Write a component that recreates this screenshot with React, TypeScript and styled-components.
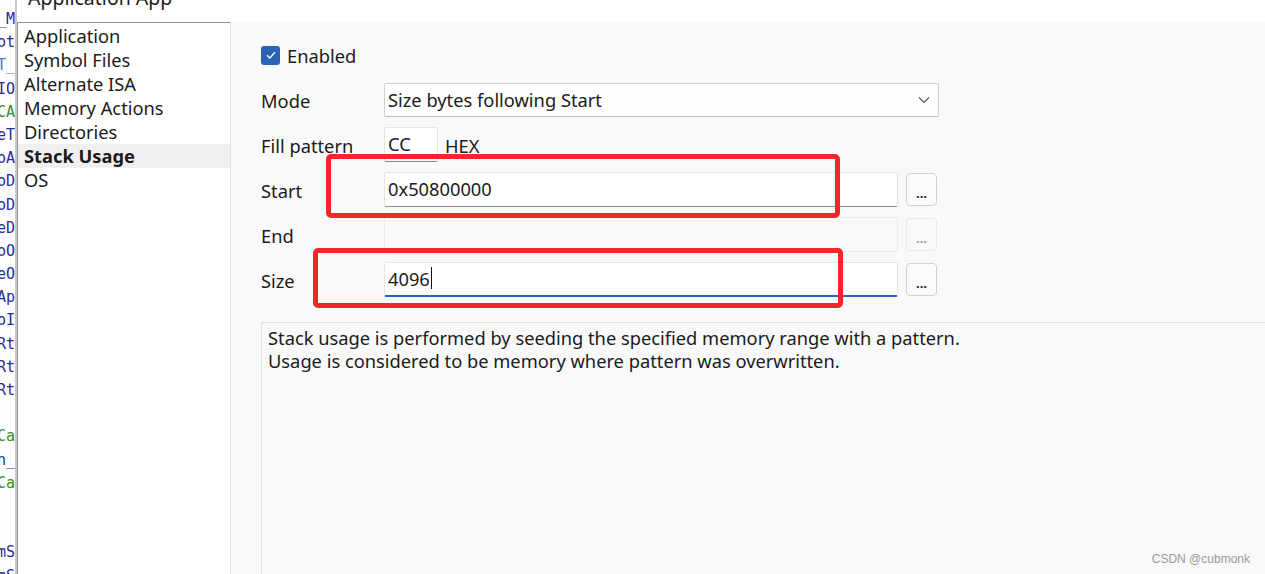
import React from "react";
import styled, { createGlobalStyle } from "styled-components";

const Global = createGlobalStyle`
  html, body { margin: 0; padding: 0; background: #ffffff; }
  body { font-family: "Noto Sans", "Liberation Sans", sans-serif; color: #1b1b1b; }
  #root { height: 574px; }
`;

const Page = styled.div`
  position: relative;
  display: flex;
  width: 1265px;
  height: 574px;
  overflow: hidden;
  background: #ffffff;
`;

const CodeStrip = styled.div`
  width: 15px;
  flex: none;
  display: flex;
  flex-direction: column;
  padding-top: 8px;
  background: #fdfdfd;
  border-right: 2px solid #c9c9c9;
  box-shadow: 1px 0 2px rgba(0, 0, 0, 0.12);
  overflow: hidden;
`;

const CodeLine = styled.div<{ $c: string }>`
  height: 23.2px;
  flex: none;
  display: flex;
  justify-content: flex-end;
  white-space: nowrap;
  font-family: "DejaVu Sans Mono", "Liberation Mono", monospace;
  font-size: 15px;
  line-height: 23.2px;
  color: ${(p) => p.$c};
  overflow: hidden;
`;

const Window = styled.div`
  flex: 1;
  display: flex;
  flex-direction: column;
  min-width: 0;
`;

const TitleBar = styled.div`
  height: 22px;
  flex: none;
  background: #ffffff;
  overflow: hidden;
  padding-left: 11px;
`;

const TitleText = styled.div`
  font-size: 19.5px;
  line-height: 22px;
  margin-top: -13px;
  color: #1b1b1b;
`;

const Body = styled.div`
  flex: 1;
  display: flex;
  min-height: 0;
`;

const Nav = styled.div`
  width: 212px;
  flex: none;
  background: #ffffff;
  border-top: 1px solid #8f8f8f;
  border-left: 1px solid #8f8f8f;
  border-right: 1px solid #e3e3e3;
  padding-top: 1px;
`;

const NavItem = styled.div<{ $active?: boolean }>`
  height: 24px;
  line-height: 24px;
  padding-left: 6px;
  font-size: 18.3px;
  font-weight: ${(p) => (p.$active ? 700 : 400)};
  background: ${(p) => (p.$active ? "#f0f0f0" : "transparent")};
  color: #1b1b1b;
`;

const Content = styled.div`
  flex: 1;
  background: #f9f9f9;
  padding: 23px 0 0 30px;
  display: flex;
  flex-direction: column;
  min-width: 0;
`;

const CheckRow = styled.label`
  display: flex;
  align-items: center;
  height: 20px;
  gap: 7px;
  font-size: 18.3px;
  margin-bottom: 17px;
`;

const CheckBox = styled.span`
  width: 19px;
  height: 19px;
  border-radius: 3px;
  background: #2b62b6;
  display: flex;
  align-items: center;
  justify-content: center;
`;

const Form = styled.div`
  display: flex;
  flex-direction: column;
  gap: 10px;
`;

const Row = styled.div`
  display: flex;
  align-items: center;
  height: 35px;
`;

const Label = styled.div`
  width: 123px;
  flex: none;
  font-size: 18.3px;
  padding-top: 1px;
`;

const SelectBox = styled.div`
  width: 555px;
  height: 34px;
  box-sizing: border-box;
  border: 1px solid #cfcfcf;
  border-bottom-color: #bdbdbd;
  border-radius: 2px;
  background: #fefefe;
  display: flex;
  align-items: center;
  justify-content: space-between;
  padding: 0 8px 0 3px;
  font-size: 18.3px;
`;

const Field = styled.div<{ $w: number; $disabled?: boolean; $focus?: boolean }>`
  width: ${(p) => p.$w}px;
  height: 35px;
  box-sizing: border-box;
  border: 1px solid ${(p) => (p.$disabled ? "#ebebeb" : "#e6e6e6")};
  border-bottom: ${(p) =>
    p.$focus ? "2px solid #2a63bd" : p.$disabled ? "1px solid #ebebeb" : "1px solid #8a8a8a"};
  border-radius: 2px;
  background: ${(p) => (p.$disabled ? "#f9f9f9" : "#ffffff")};
  display: flex;
  align-items: center;
  padding: 0 3px 2px;
  font-size: 18.3px;
`;

const Caret = styled.span`
  display: inline-block;
  width: 1px;
  height: 22px;
  background: #111;
  margin-left: 1px;
`;

const Suffix = styled.div`
  font-size: 18.3px;
  margin-left: 7px;
  padding-top: 2px;
`;

const DotButton = styled.button<{ $disabled?: boolean }>`
  width: 31px;
  height: 33px;
  margin-left: 8px;
  box-sizing: border-box;
  border: 1px solid ${(p) => (p.$disabled ? "#e8e8e8" : "#d2d2d2")};
  border-radius: 4px;
  background: ${(p) => (p.$disabled ? "#f9f9f9" : "#fbfbfb")};
  color: ${(p) => (p.$disabled ? "#a0a0a0" : "#1b1b1b")};
  font-family: "Noto Sans", sans-serif;
  font-size: 13px;
  font-weight: 700;
  padding: 6px 0 0;
  line-height: 20px;
`;

const Description = styled.div`
  margin-top: 25px;
  margin-right: -4px;
  flex: 1;
  border: 1px solid #e3e3e3;
  border-bottom: none;
  border-right: none;
  background: #f9f9f9;
  padding: 3px 6px;
  font-size: 18.3px;
  line-height: 23px;
`;

const Annotation = styled.div<{ $x: number; $y: number; $w: number; $h: number }>`
  position: absolute;
  left: ${(p) => p.$x}px;
  top: ${(p) => p.$y}px;
  width: ${(p) => p.$w}px;
  height: ${(p) => p.$h}px;
  box-sizing: border-box;
  border: 5px solid #f1282a;
  border-radius: 5px;
  pointer-events: none;
`;

const Watermark = styled.div`
  position: absolute;
  right: 15px;
  bottom: 8px;
  font-family: "Liberation Sans", Arial, sans-serif;
  font-size: 12px;
  color: #9a9a9a;
`;

const codeLines: [string, string][] = [
  ["__M", "#2d2a9c"],
  ["pot", "#2d2a9c"],
  ["_T_", "#3f7fd6"],
  ["_IO", "#2d2a9c"],
  ["_CA", "#3a8a2e"],
  ["eeT", "#2d2a9c"],
  ["boA", "#2d2a9c"],
  ["boD", "#2d2a9c"],
  ["boD", "#2d2a9c"],
  ["eeD", "#2d2a9c"],
  ["boO", "#2d2a9c"],
  ["eeO", "#2d2a9c"],
  ["pAp", "#2d2a9c"],
  ["boI", "#2d2a9c"],
  ["_Rt", "#2d2a9c"],
  ["_Rt", "#2d2a9c"],
  ["_Rt", "#2d2a9c"],
  ["", "#2d2a9c"],
  ["_Ca", "#3a8a2e"],
  ["in_", "#2d2a9c"],
  ["_Ca", "#3a8a2e"],
  ["", "#2d2a9c"],
  ["", "#2d2a9c"],
  ["umS", "#2d2a9c"],
  ["umS", "#2d2a9c"],
];

const navItems = [
  "Application",
  "Symbol Files",
  "Alternate ISA",
  "Memory Actions",
  "Directories",
  "Stack Usage",
  "OS",
];

export default function App() {
  return (
    <>
      <Global />
      <Page>
        <CodeStrip>
          {codeLines.map(([t, c], i) => (
            <CodeLine key={i} $c={c}>
              {t}
            </CodeLine>
          ))}
        </CodeStrip>
        <Window>
          <TitleBar>
            <TitleText>Application App</TitleText>
          </TitleBar>
          <Body>
            <Nav>
              {navItems.map((n) => (
                <NavItem key={n} $active={n === "Stack Usage"}>
                  {n}
                </NavItem>
              ))}
            </Nav>
            <Content>
              <CheckRow>
                <CheckBox>
                  <svg width="12" height="12" viewBox="0 0 12 12">
                    <path d="M2 6.3 L4.8 9 L10 3.2" fill="none" stroke="#ffffff" strokeWidth="1.3" />
                  </svg>
                </CheckBox>
                Enabled
              </CheckRow>
              <Form>
                <Row>
                  <Label>Mode</Label>
                  <SelectBox>
                    <span>Size bytes following Start</span>
                    <svg width="12" height="8" viewBox="0 0 12 8">
                      <path d="M1 1.5 L6 6.5 L11 1.5" fill="none" stroke="#555" strokeWidth="1.2" />
                    </svg>
                  </SelectBox>
                </Row>
                <Row>
                  <Label>Fill pattern</Label>
                  <Field $w={54}>CC</Field>
                  <Suffix>HEX</Suffix>
                </Row>
                <Row>
                  <Label>Start</Label>
                  <Field $w={514}>0x50800000</Field>
                  <DotButton>...</DotButton>
                </Row>
                <Row>
                  <Label>End</Label>
                  <Field $w={514} $disabled />
                  <DotButton $disabled>...</DotButton>
                </Row>
                <Row>
                  <Label>Size</Label>
                  <Field $w={514} $focus>
                    4096
                    <Caret />
                  </Field>
                  <DotButton>...</DotButton>
                </Row>
              </Form>
              <Description>
                Stack usage is performed by seeding the specified memory range with a pattern.
                <br />
                Usage is considered to be memory where pattern was overwritten.
              </Description>
            </Content>
          </Body>
        </Window>
        <Annotation $x={326} $y={154} $w={514} $h={64} />
        <Annotation $x={313} $y={248} $w={530} $h={60} />
        <Watermark>CSDN @cubmonk</Watermark>
      </Page>
    </>
  );
}
